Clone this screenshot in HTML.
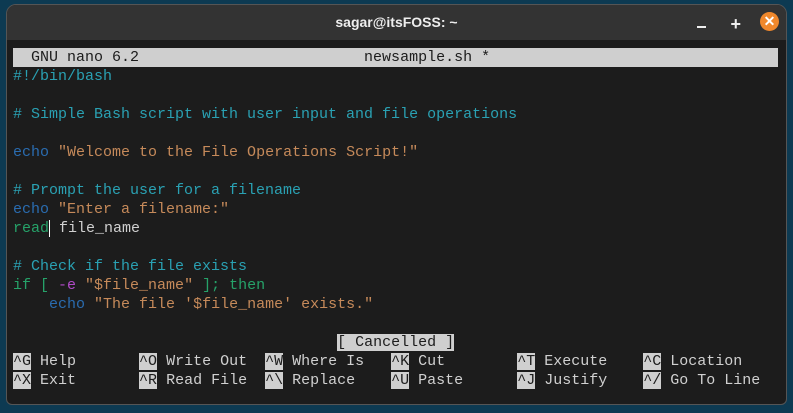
<!DOCTYPE html>
<html><head><style>
body{margin:0;width:793px;height:413px;background:#0d3a52;overflow:hidden;position:relative;font-family:"Liberation Sans",sans-serif}
.win{position:absolute;left:6px;top:4px;width:781px;height:401px;background:#1c1c1c;border-radius:10px 10px 6px 6px;overflow:hidden;border:1px solid #555;box-sizing:border-box}
.tb{position:absolute;left:0;top:0;right:0;height:35px;background:#333;color:#eee;font-size:14px;font-weight:bold;text-align:center;line-height:35px}
.t{position:absolute;left:6px;top:43px;font-family:"Liberation Mono",monospace;font-size:15px;color:#d0d0d0}
.l{height:19px;line-height:19px;white-space:pre}
.bar{background:#cfcfcf;color:#1c1c1c;width:765px}
.c{color:#2aa1b3}.e{color:#2a6cb0}.s{color:#c68a5a}.g{color:#26a269}.p{color:#b04ac8}
.k{background:#cfcfcf;color:#1c1c1c}
</style></head><body>
<div class="win">
<div class="tb">sagar@itsFOSS: ~</div>
<div style="position:absolute;right:80px;top:21px;width:9px;height:2px;background:#eee"></div>
<div style="position:absolute;right:45px;top:9px;color:#eee;font-size:18px;font-weight:bold">+</div>
<div style="position:absolute;right:7px;top:7px;width:19px;height:19px;border-radius:50%;background:#f0882c;color:#fff;font-size:14px;font-weight:bold;text-align:center;line-height:19px">✕</div>
<div class="t"><div class="l bar">  GNU nano 6.2                         newsample.sh *</div><div class="l c">#!/bin/bash</div><div class="l"> </div><div class="l c"># Simple Bash script with user input and file operations</div><div class="l"> </div><div class="l"><span class="e">echo</span> <span class="s">"Welcome to the File Operations Script!"</span></div><div class="l"> </div><div class="l c"># Prompt the user for a filename</div><div class="l"><span class="e">echo</span> <span class="s">"Enter a filename:"</span></div><div class="l"><span class="g">read</span><span style="border-left:1px solid #fff"></span> file_name</div><div class="l"> </div><div class="l c"># Check if the file exists</div><div class="l"><span class="g">if [ </span><span class="p">-e</span> <span class="s">"$file_name"</span><span class="g"> ]; then</span></div><div class="l">    <span class="e">echo</span> <span class="s">"The file '$file_name' exists."</span></div><div class="l"> </div><div class="l">                                    <span class="k">[ Cancelled ]</span></div><div class="l"><span class="k">^G</span> Help       <span class="k">^O</span> Write Out  <span class="k">^W</span> Where Is   <span class="k">^K</span> Cut        <span class="k">^T</span> Execute    <span class="k">^C</span> Location</div><div class="l"><span class="k">^X</span> Exit       <span class="k">^R</span> Read File  <span class="k">^\</span> Replace    <span class="k">^U</span> Paste      <span class="k">^J</span> Justify    <span class="k">^/</span> Go To Line</div></div>
</div>
</body></html>
